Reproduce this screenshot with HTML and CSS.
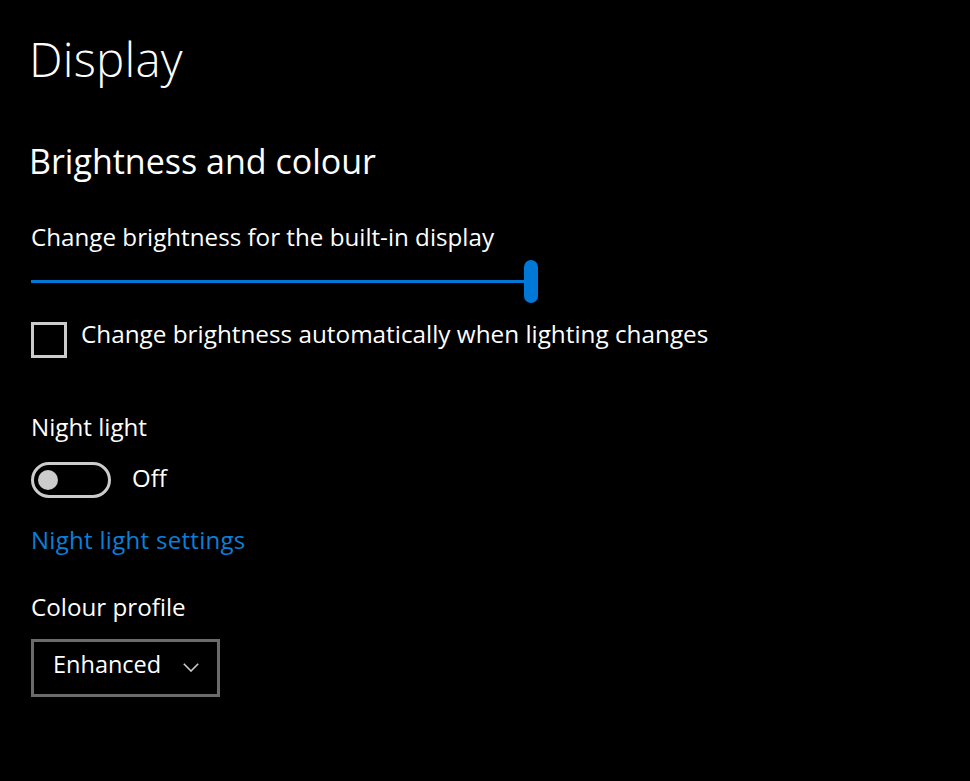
FILE: index.html
```html
<!DOCTYPE html>
<html lang="en">
<head>
<meta charset="utf-8">
<title>Display</title>
<link rel="stylesheet" href="styles.css">
</head>
<body>
<main class="page">
  <h1 class="title">Display</h1>
  <h2 class="section">Brightness and colour</h2>

  <div class="label label-brightness">Change brightness for the built-in display</div>
  <div class="slider">
    <div class="slider-track"></div>
    <div class="slider-thumb"></div>
  </div>

  <div class="check-row">
    <span class="checkbox"></span>
    <span class="check-text">Change brightness automatically when lighting changes</span>
  </div>

  <div class="label label-night">Night light</div>
  <div class="toggle-row">
    <span class="toggle"><span class="toggle-knob"></span></span>
    <span class="toggle-text">Off</span>
  </div>

  <a class="link" href="#">Night light settings</a>

  <div class="label label-profile">Colour profile</div>
  <div class="dropdown">
    <span class="dropdown-text">Enhanced</span>
    <svg class="chevron" width="16" height="9" viewBox="0 0 16 9" aria-hidden="true">
      <path d="M0.8 0.8 L8 8 L15.2 0.8" fill="none" stroke="#cccccc" stroke-width="1.6"/>
    </svg>
  </div>
</main>
</body>
</html>
```

FILE: styles.css
```css
html, body {
  margin: 0;
  padding: 0;
  background: #000;
}

body {
  width: 970px;
  height: 781px;
  overflow: hidden;
  color: #fff;
  font-family: "Open Sans", "Noto Sans", sans-serif;
}

.page {
  display: flex;
  flex-direction: column;
  align-items: flex-start;
  padding: 29px 0 0 31px;
}

.title {
  margin: 0 0 0 -2px;
  font-size: 47.5px;
  line-height: 60px;
  font-weight: 300;
  letter-spacing: 0.2px;
}

.section {
  margin: 50px 0 0 -2px;
  font-size: 34px;
  line-height: 44px;
  font-weight: 400;
}

.label {
  font-size: 24.2px;
  line-height: 32px;
}

.label-brightness {
  margin-top: 38px;
}

.slider {
  margin-top: 7px;
  display: flex;
  align-items: center;
  height: 43px;
}

.slider-track {
  width: 494px;
  height: 3px;
  background: #0078d7;
}

.slider-thumb {
  width: 14px;
  height: 43px;
  border-radius: 7px;
  background: #0078d7;
  margin-left: -1px;
}

.check-row {
  margin-top: 19px;
  display: flex;
  align-items: flex-start;
  height: 36px;
}

.checkbox {
  width: 36px;
  height: 36px;
  box-sizing: border-box;
  border: 3px solid #cccccc;
}

.check-text {
  margin: -4px 0 0 14px;
  font-size: 24.3px;
  line-height: 32px;
}

.label-night {
  margin-top: 53px;
}

.toggle-row {
  margin-top: 19px;
  display: flex;
  align-items: flex-start;
  height: 36px;
}

.toggle {
  width: 80px;
  height: 36px;
  box-sizing: border-box;
  border: 3px solid #cccccc;
  border-radius: 18px;
  display: flex;
  align-items: center;
  padding-left: 4px;
}

.toggle-knob {
  width: 20px;
  height: 20px;
  border-radius: 50%;
  background: #cccccc;
}

.toggle-text {
  margin-left: 21px;
  font-size: 24px;
  line-height: 32px;
}

.link {
  margin-top: 26px;
  font-size: 24px;
  line-height: 32px;
  letter-spacing: 0.3px;
  color: #0a7fd8;
  text-decoration: none;
}

.label-profile {
  margin-top: 35px;
}

.dropdown {
  margin-top: 16px;
  width: 189px;
  height: 58px;
  box-sizing: border-box;
  border: 3px solid #6b6b6b;
  display: flex;
  align-items: flex-start;
  padding: 6px 18px 0 19px;
}

.dropdown-text {
  font-size: 23.5px;
  line-height: 32px;
}

.chevron {
  margin: 15px 0 0 auto;
  display: block;
}
```
